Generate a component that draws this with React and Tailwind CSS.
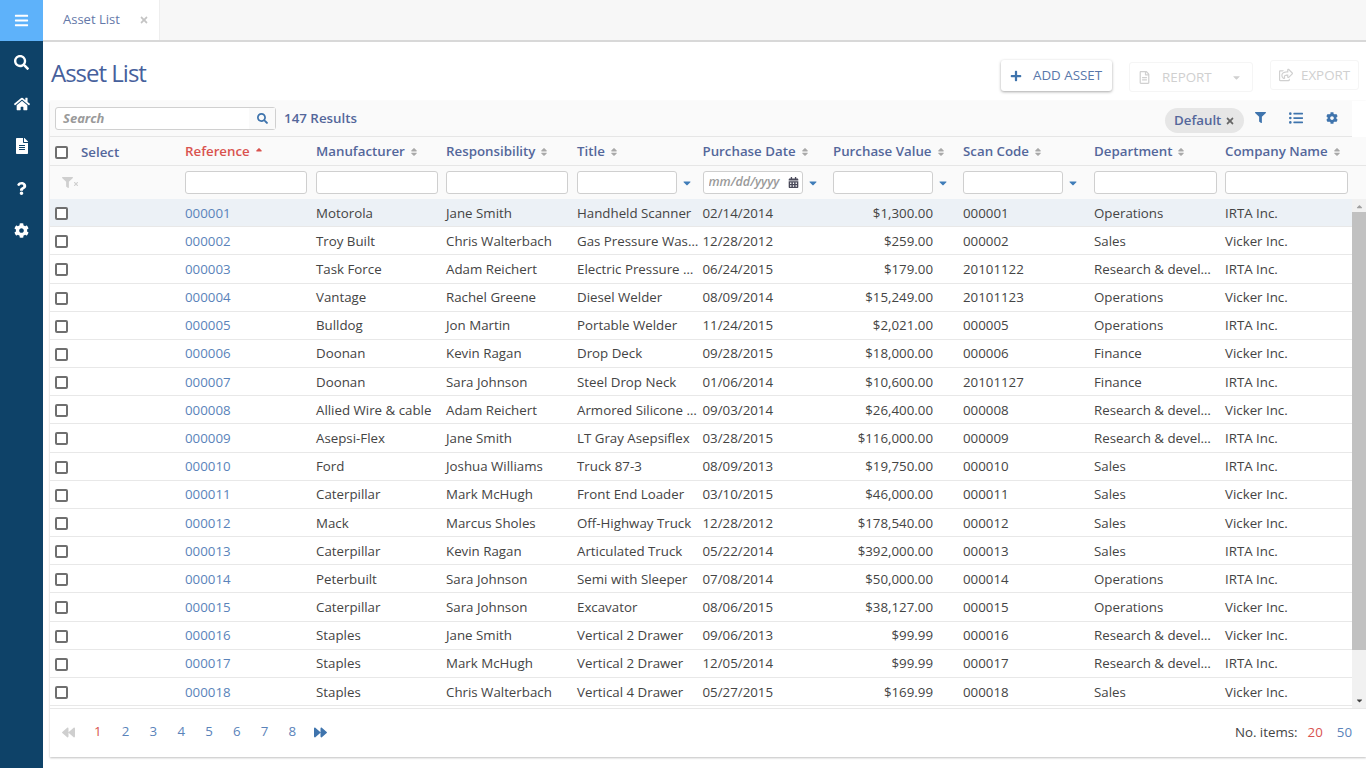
import {
  FaBars,
  FaSearch,
  FaHome,
  FaFileAlt,
  FaQuestion,
  FaCog,
  FaFilter,
  FaListUl,
  FaSort,
  FaSortUp,
  FaCaretDown,
  FaCaretUp,
  FaPlus,
  FaRegFileAlt,
  FaRegShareSquare,
  FaBackward,
  FaForward,
  FaCalendarAlt,
  FaTimes,
} from "react-icons/fa";

const gridCols =
  "grid grid-cols-[130px_131px_130px_131px_125.5px_130.5px_130px_131px_131px_132px]";

const columns = [
  { label: "Reference", active: true },
  { label: "Manufacturer" },
  { label: "Responsibility" },
  { label: "Title" },
  { label: "Purchase Date" },
  { label: "Purchase Value" },
  { label: "Scan Code" },
  { label: "Department" },
  { label: "Company Name" },
];

const rows = [
  ["000001", "Motorola", "Jane Smith", "Handheld Scanner", "02/14/2014", "$1,300.00", "000001", "Operations", "IRTA Inc."],
  ["000002", "Troy Built", "Chris Walterbach", "Gas Pressure Washer", "12/28/2012", "$259.00", "000002", "Sales", "Vicker Inc."],
  ["000003", "Task Force", "Adam Reichert", "Electric Pressure Washer", "06/24/2015", "$179.00", "20101122", "Research & development", "IRTA Inc."],
  ["000004", "Vantage", "Rachel Greene", "Diesel Welder", "08/09/2014", "$15,249.00", "20101123", "Operations", "Vicker Inc."],
  ["000005", "Bulldog", "Jon Martin", "Portable Welder", "11/24/2015", "$2,021.00", "000005", "Operations", "IRTA Inc."],
  ["000006", "Doonan", "Kevin Ragan", "Drop Deck", "09/28/2015", "$18,000.00", "000006", "Finance", "Vicker Inc."],
  ["000007", "Doonan", "Sara Johnson", "Steel Drop Neck", "01/06/2014", "$10,600.00", "20101127", "Finance", "IRTA Inc."],
  ["000008", "Allied Wire & cable", "Adam Reichert", "Armored Silicone Cable", "09/03/2014", "$26,400.00", "000008", "Research & development", "Vicker Inc."],
  ["000009", "Asepsi-Flex", "Jane Smith", "LT Gray Asepsiflex", "03/28/2015", "$116,000.00", "000009", "Research & development", "IRTA Inc."],
  ["000010", "Ford", "Joshua Williams", "Truck 87-3", "08/09/2013", "$19,750.00", "000010", "Sales", "IRTA Inc."],
  ["000011", "Caterpillar", "Mark McHugh", "Front End Loader", "03/10/2015", "$46,000.00", "000011", "Sales", "Vicker Inc."],
  ["000012", "Mack", "Marcus Sholes", "Off-Highway Truck", "12/28/2012", "$178,540.00", "000012", "Sales", "Vicker Inc."],
  ["000013", "Caterpillar", "Kevin Ragan", "Articulated Truck", "05/22/2014", "$392,000.00", "000013", "Sales", "IRTA Inc."],
  ["000014", "Peterbuilt", "Sara Johnson", "Semi with Sleeper", "07/08/2014", "$50,000.00", "000014", "Operations", "IRTA Inc."],
  ["000015", "Caterpillar", "Sara Johnson", "Excavator", "08/06/2015", "$38,127.00", "000015", "Operations", "Vicker Inc."],
  ["000016", "Staples", "Jane Smith", "Vertical 2 Drawer", "09/06/2013", "$99.99", "000016", "Research & development", "Vicker Inc."],
  ["000017", "Staples", "Mark McHugh", "Vertical 2 Drawer", "12/05/2014", "$99.99", "000017", "Research & development", "IRTA Inc."],
  ["000018", "Staples", "Chris Walterbach", "Vertical 4 Drawer", "05/27/2015", "$169.99", "000018", "Sales", "Vicker Inc."],
];

function Checkbox() {
  return (
    <span className="block w-[13px] h-[13px] rounded-[2px] border-2 border-[#6f6f6f] bg-white"></span>
  );
}

function FilterInput({ width = "w-[122px]" }) {
  return (
    <div className={`${width} h-[23px] rounded-[3px] border border-[#cfcfcf] bg-white`}></div>
  );
}

function FilterCaret() {
  return <FaCaretDown size={12} className="text-[#3f7cb8] ml-[4px]" />;
}

export default function App() {
  return (
    <div className="flex h-[768px] w-[1366px] overflow-hidden bg-white font-['Open_Sans',sans-serif] text-[13.3px] text-[#444]">
      {/* Sidebar */}

      <div className="w-[43px] shrink-0 bg-[#0e4268] flex flex-col items-center text-white">
        <div className="w-full h-[41px] bg-[#5eb2fa] flex items-center justify-center">
          <FaBars size={15} />
        </div>
        <div className="flex flex-col items-center">
          <span className="h-[42px] flex items-center justify-center"><FaSearch size={15} /></span>
          <span className="h-[42px] flex items-center justify-center"><FaHome size={16} /></span>
          <span className="h-[42px] flex items-center justify-center"><FaFileAlt size={16} /></span>
          <span className="h-[42.5px] flex items-center justify-center"><FaQuestion size={13} /></span>
          <span className="h-[42.5px] flex items-center justify-center"><FaCog size={15} /></span>
        </div>
      </div>

      <div className="flex-1 min-w-0 flex flex-col">
        {/* Tabs */}

        <div className="h-[42px] shrink-0 flex bg-[#f7f7f7] border-b-2 border-[#d8d8d8]">
          <div className="w-[117px] bg-white border-r border-[#eeeeee] flex items-center pl-[20px] text-[#6478a8]">
            <span className="text-[13px]">Asset List</span>
            <FaTimes size={10} className="text-[#c4c4c4] ml-[19px]" />
          </div>
        </div>

        {/* Title row */}

        <div className="h-[59px] shrink-0 flex items-start justify-between">
          <h1 className="ml-[8px] mt-[15px] text-[24px] leading-[32px] tracking-[-1px] text-[#46609c]">
            Asset List
          </h1>
          <div className="flex items-start mt-[18px] mr-[7px]">
            <button className="w-[111px] h-[31px] rounded-[3px] bg-white shadow-[0_1px_3px_rgba(0,0,0,0.35)] flex items-center pl-[9px] text-[#5877aa]">
              <FaPlus size={12} className="text-[#3f74ad]" />
              <span className="ml-[11px] text-[13.35px]">ADD ASSET</span>
            </button>
            <button className="w-[124px] h-[30px] ml-[17px] mt-[2px] rounded-[3px] border border-[#f5f5f5] bg-white flex items-center pl-[8px] text-[#d0d0d0]">
              <FaRegFileAlt size={13} />
              <span className="ml-[11px] text-[13.35px]">REPORT</span>
              <FaCaretDown size={11} className="ml-[19px]" />
            </button>
            <button className="w-[89px] h-[30px] ml-[17px] rounded-[3px] border border-[#f5f5f5] bg-white flex items-center pl-[8px] text-[#d0d0d0]">
              <FaRegShareSquare size={14} />
              <span className="ml-[8px] text-[13.35px]">EXPORT</span>
            </button>
          </div>
        </div>

        {/* Panel */}

        <div className="ml-[7px] w-[1316px] h-[656px] flex flex-col bg-white shadow-[0_1px_2px_rgba(0,0,0,0.25)]">
          {/* Toolbar */}

          <div className="h-[36px] shrink-0 w-[1302px] flex items-center bg-[#fafafa] border-b border-[#e6e6e6]">
            <div className="ml-[5px] w-[221px] h-[23px] flex items-center justify-between rounded-[3px] border border-[#d0d0d0] bg-white">
              <span className="pl-[7px] italic font-bold text-[13px] text-[#9a9a9a]">Search</span>
              <span className="w-[26px] h-full flex items-center justify-center bg-[#fafafa]">
                <FaSearch size={11} className="text-[#3f74ad]" />
              </span>
            </div>
            <span className="ml-[8px] font-semibold text-[13.35px] text-[#54679b]">147 Results</span>
            <div className="ml-auto flex items-center">
              <span className="h-[25px] w-[79px] mt-[4px] rounded-full bg-[#e6e6e6] flex items-center pl-[9px] font-semibold text-[#54679b]">
                Default
                <FaTimes size={10} className="ml-[4px] text-[#666]" />
              </span>
              <FaFilter size={11} className="ml-[11px] -mt-[2px] text-[#3f74ad]" />
              <FaListUl size={14} className="ml-[23px] -mt-[2px] text-[#3f74ad]" />
              <FaCog size={12} className="ml-[23px] mr-[14px] -mt-[2px] text-[#3f74ad]" />
            </div>
          </div>

          {/* Header */}

          <div className={`${gridCols} h-[29px] pt-[2px] shrink-0 items-center bg-[#fafafa] border-b border-[#e6e6e6] font-semibold text-[#54679b]`}>
            <div className="flex items-center pl-[5px]">
              <Checkbox />
              <span className="ml-[13px] relative top-[1px]">Select</span>
            </div>
            {columns.map((col) => (
              <div
                key={col.label}
                className={`flex items-center pl-[5px] ${col.active ? "text-[#d9534f]" : ""}`}
              >
                {col.label}
                {col.active ? (
                  <FaSortUp size={10} className="ml-[4px] text-[#d9534f]" />
                ) : (
                  <FaSort size={10} className="ml-[4px] text-[#a9a9a9]" />
                )}
              </div>
            ))}
          </div>

          {/* Filters */}

          <div className={`${gridCols} h-[33px] shrink-0 items-center bg-[#fafafa]`}>
            <div className="pl-[12px] flex items-center text-[#cfcfcf]">
              <FaFilter size={11} />
              <FaTimes size={6} className="mt-[3px]" />
            </div>
            <div className="pl-[5px]"><FilterInput /></div>
            <div className="pl-[5px]"><FilterInput /></div>
            <div className="pl-[5px]"><FilterInput /></div>
            <div className="pl-[5px] flex items-center">
              <FilterInput width="w-[100px]" />
              <FilterCaret />
            </div>
            <div className="pl-[5px] flex items-center">
              <div className="w-[100px] h-[23px] rounded-[3px] border border-[#cfcfcf] bg-white flex items-center justify-between pl-[5px] pr-[3px] overflow-hidden">
                <span className="italic font-semibold text-[12.5px] text-[#9a9a9a] w-[72px] overflow-hidden whitespace-nowrap">
                  mm/dd/yyyy
                </span>
                <FaCalendarAlt size={11} className="text-[#4a4a5a] shrink-0" />
              </div>
              <FilterCaret />
            </div>
            <div className="pl-[5px] flex items-center">
              <FilterInput width="w-[100px]" />
              <FilterCaret />
            </div>
            <div className="pl-[5px] flex items-center">
              <FilterInput width="w-[100px]" />
              <FilterCaret />
            </div>
            <div className="pl-[5px]"><FilterInput width="w-[123px]" /></div>
            <div className="pl-[5px]"><FilterInput width="w-[123px]" /></div>
          </div>

          {/* Rows */}

          <div className="h-[509px] shrink-0 flex overflow-hidden">
            <div className="w-[1302px] shrink-0">
              {rows.map((row, i) => (
                <div
                  key={row[0]}
                  className={`${gridCols} h-[28.18px] pt-[2px] items-center border-b border-[#e8e8e8] ${i === 0 ? "bg-[#ecf1f6]" : "bg-white"}`}
                >
                  <div className="pl-[5px]">
                    <Checkbox />
                  </div>
                  <div className="pl-[5px] text-[#5a83ba]">{row[0]}</div>
                  {row.slice(1).map((cell, c) => (
                    <div
                      key={c}
                      className={`pl-[5px] whitespace-nowrap overflow-hidden text-ellipsis ${c === 2 ? "-mr-[2px]" : ""} ${c === 4 ? "text-right pr-[25px]" : ""} ${c === 6 ? "pr-[5px]" : ""}`}
                    >
                      {cell}
                    </div>
                  ))}
                </div>
              ))}
            </div>

            {/* Scrollbar */}

            <div className="w-[14px] shrink-0 bg-[#f1f1f1] flex flex-col items-center">
              <FaCaretUp size={9} className="mt-[3px] text-[#a0a0a0]" />
              <div className="w-full h-[438px] mt-[1px] bg-[#c1c1c1]"></div>
              <FaCaretDown size={9} className="mt-auto mb-[3px] text-[#444]" />
            </div>
          </div>

          {/* Pagination */}

          <div className="flex-1 flex items-center justify-between pb-[2px] border-t border-[#e8e8e8] text-[#5a83ba]">
            <div className="flex items-center pl-[12px]">
              <FaBackward size={13} className="text-[#cfcfcf]" />
              <span className="ml-[19px] text-[#d9534f]">1</span>
              {[2, 3, 4, 5, 6, 7, 8].map((n) => (
                <span key={n} className="ml-[20.2px]">{n}</span>
              ))}
              <FaForward size={13} className="ml-[18px] text-[#3f74ad]" />
            </div>
            <div className="flex items-center mr-[14px] pt-[2px]">
              <span className="text-[#444]">No. items:</span>
              <span className="ml-[10px] text-[#d9534f]">20</span>
              <span className="ml-[14px]">50</span>
            </div>
          </div>
        </div>
      </div>
    </div>
  );
}
